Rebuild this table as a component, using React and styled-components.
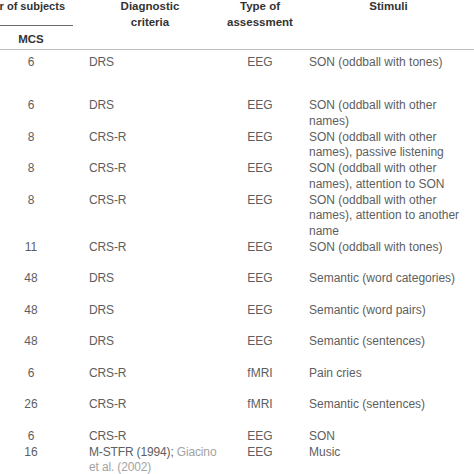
import React from "react";
import styled, { createGlobalStyle } from "styled-components";

const GlobalStyle = createGlobalStyle`
  html, body {
    margin: 0;
    padding: 0;
    background: #fff;
  }
  body {
    width: 474px;
    height: 474px;
    overflow: hidden;
    font-family: "Liberation Sans", Arial, sans-serif;
  }
`;

const LINE = 15.75;
const COLUMNS = "73px 150px 74px 1fr";

const Table = styled.div`
  width: 474px;
  margin-top: -2px;
`;

const Head = styled.div`
  display: grid;
  grid-template-columns: ${COLUMNS};
  border-bottom: 1px solid #bdbdbd;
  padding-bottom: 2px;
  font-size: 11.5px;
  font-weight: 700;
  line-height: 16px;
  color: #333;
`;

const GroupHead = styled.div`
  display: flex;
  flex-direction: column;
`;

const GroupTitle = styled.div`
  display: flex;
  justify-content: flex-end;
  overflow: hidden;
  white-space: nowrap;
  font-size: 11px;
  padding: 0 8px 11px 0;
  border-bottom: 1px solid #6a6a6a;
`;

const SubHead = styled.div`
  width: 62px;
  margin-top: 5px;
  text-align: center;
`;

const HeadCell = styled.div`
  text-align: center;
  padding-left: ${(p) => p.$indent || 0}px;
  padding-right: ${(p) => p.$trim || 0}px;
`;

const Body = styled.div`
  padding-top: 5px;
  font-size: 12px;
  line-height: ${LINE}px;
  color: #5e5e5e;
`;

const Row = styled.div`
  display: grid;
  grid-template-columns: ${COLUMNS};
  min-height: ${(p) => p.$height ?? p.$slots * LINE}px;
  align-items: start;
`;

const Count = styled.div`
  width: 62px;
  text-align: center;
`;

const Criteria = styled.div`
  padding-left: 16px;
  letter-spacing: -0.15px;
`;

const Assessment = styled.div`
  text-align: center;
`;

const Stimuli = styled.div`
  padding-left: 12px;
  padding-right: 6px;
`;

const Cite = styled.span`
  color: #a3a3a3;
`;

const rows = [
  { n: "6", crit: "DRS", type: "EEG", stim: "SON (oddball with tones)", height: 43 },
  { n: "6", crit: "DRS", type: "EEG", stim: "SON (oddball with other names)", slots: 2 },
  { n: "8", crit: "CRS-R", type: "EEG", stim: "SON (oddball with other names), passive listening", slots: 2 },
  { n: "8", crit: "CRS-R", type: "EEG", stim: "SON (oddball with other names), attention to SON", slots: 2 },
  { n: "8", crit: "CRS-R", type: "EEG", stim: "SON (oddball with other names), attention to another name", slots: 3 },
  { n: "11", crit: "CRS-R", type: "EEG", stim: "SON (oddball with tones)", slots: 2 },
  { n: "48", crit: "DRS", type: "EEG", stim: "Semantic (word categories)", slots: 2 },
  { n: "48", crit: "DRS", type: "EEG", stim: "Semantic (word pairs)", slots: 2 },
  { n: "48", crit: "DRS", type: "EEG", stim: "Semantic (sentences)", slots: 2 },
  { n: "6", crit: "CRS-R", type: "fMRI", stim: "Pain cries", slots: 2 },
  { n: "26", crit: "CRS-R", type: "fMRI", stim: "Semantic (sentences)", slots: 2 },
  { n: "6", crit: "CRS-R", type: "EEG", stim: "SON", slots: 1 },
  {
    n: "16",
    crit: (
      <>
        M-STFR (1994); <Cite>Giacino et al. (2002)</Cite>
      </>
    ),
    type: "EEG",
    stim: "Music",
    slots: 2,
  },
];

const App = () => (
  <>
    <GlobalStyle />
    <Table>
      <Head>
        <GroupHead>
          <GroupTitle>Number of subjects</GroupTitle>
          <SubHead>MCS</SubHead>
        </GroupHead>
        <HeadCell $indent={16} $trim={12}>
          Diagnostic
          <br />
          criteria
        </HeadCell>
        <HeadCell>
          Type of
          <br />
          assessment
        </HeadCell>
        <HeadCell $indent={12} $trim={6}>
          Stimuli
        </HeadCell>
      </Head>
      <Body>
        {rows.map((r, i) => (
          <Row key={i} $slots={r.slots} $height={r.height}>
            <Count>{r.n}</Count>
            <Criteria>{r.crit}</Criteria>
            <Assessment>{r.type}</Assessment>
            <Stimuli>{r.stim}</Stimuli>
          </Row>
        ))}
      </Body>
    </Table>
  </>
);

export default App;
